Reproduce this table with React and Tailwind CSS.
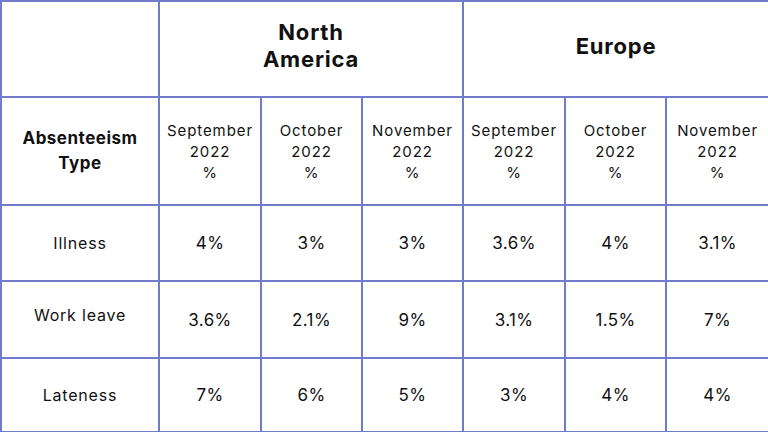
const months = ["September", "October", "November"];

const rows = [
  { label: "Illness", values: ["4%", "3%", "3%", "3.6%", "4%", "3.1%"], h: "h-[76px]" },
  { label: "Work leave", values: ["3.6%", "2.1%", "9%", "3.1%", "1.5%", "7%"], h: "h-[77px]" },
  { label: "Lateness", values: ["7%", "6%", "5%", "3%", "4%", "4%"], h: "h-[74px]" },
];

const cell = "border-2 border-[#6f7cc9] text-center align-middle p-0";

export default function App() {
  return (
    <div className="w-[768px] h-[432px] bg-white overflow-hidden text-[#111]" style={{ fontFamily: "Inter, 'Noto Sans', sans-serif" }}>
      <table className="w-[768px] h-[432px] border-collapse table-fixed">
        <colgroup>
          <col className="w-[158px]" />
          <col className="w-[102px]" />
          <col className="w-[101px]" />
          <col className="w-[101px]" />
          <col className="w-[102px]" />
          <col className="w-[101px]" />
          <col className="w-[103px]" />
        </colgroup>
        <thead>
          <tr className="h-[96px]">
            <th className={cell}></th>
            <th colSpan={3} className={cell}>
              <div className="-mt-[6px] text-[22px] font-bold leading-[27px] tracking-[0.8px]">
                North
                <br />
                America
              </div>
            </th>
            <th colSpan={3} className={cell}>
              <div className="-mt-[6px] text-[22px] font-bold leading-[27px] tracking-[0.8px]">Europe</div>
            </th>
          </tr>
          <tr className="h-[108px]">
            <th className={cell}>
              <div className="text-[17px] font-bold leading-[25px] tracking-[0.5px]">
                Absenteeism
                <br />
                Type
              </div>
            </th>
            {[0, 1].map((r) =>
              months.map((m) => (
                <th key={r + m} className={cell}>
                  <div className="text-[15px] font-normal leading-[21px] tracking-[0.9px]">
                    {m}
                    <br />
                    2022
                    <br />%
                  </div>
                </th>
              ))
            )}
          </tr>
        </thead>
        <tbody>
          {rows.map((row) => (
            <tr key={row.label} className={row.h}>
              <td className={cell}>
                <div className={"text-[16px] leading-[20px] tracking-[0.8px] " + (row.label === "Work leave" ? "-mt-[10px]" : "")}>{row.label}</div>
              </td>
              {row.values.map((v, i) => (
                <td key={i} className={cell}>
                  <div className="text-[17px] leading-[22px] tracking-[0.4px]">{v}</div>
                </td>
              ))}
            </tr>
          ))}
        </tbody>
      </table>
    </div>
  );
}
